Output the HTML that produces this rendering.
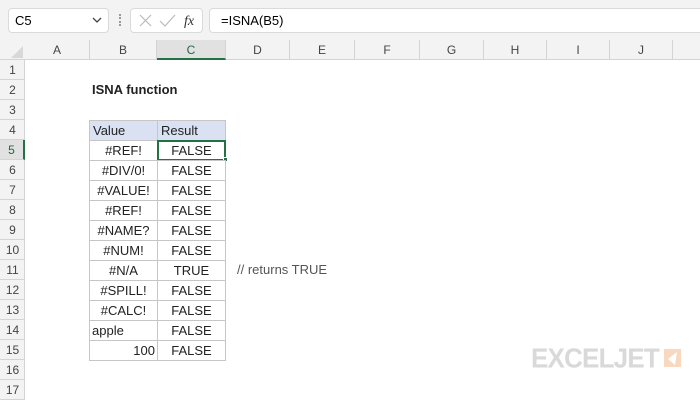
<!DOCTYPE html><html><head><style>
body{margin:0;width:700px;height:400px;overflow:hidden;background:#fff;font-family:"Liberation Sans",sans-serif;position:relative}
div{position:absolute;box-sizing:border-box}
.t{font-size:13px;color:#222;line-height:20px}
.ch{top:40px;height:20px;line-height:20px;text-align:center;font-size:12px;color:#444;border-right:1px solid #d4d4d4}
.rh{left:0;width:25px;height:20px;line-height:20px;text-align:center;font-size:12px;color:#444;border-bottom:1px solid #d4d4d4}
.c{height:21px;border:1px solid #c6c6c6;font-size:13px;line-height:19px;color:#222}
</style></head><body>
<div style="left:0;top:0;width:700px;height:40px;background:#f3f3f3"></div>
<div style="left:8px;top:8px;width:101px;height:25px;background:#fff;border:1px solid #dadada;border-radius:4px;font-size:13px;line-height:23px;padding-left:6px">C5</div>
<svg style="position:absolute;left:92px;top:17px" width="10" height="7"><path d="M1 1L5 5L9 1" stroke="#444" fill="none" stroke-width="1.3"/></svg>
<div style="left:119px;top:14px;width:2px;height:12px;border-left:2px dotted #999"></div>
<div style="left:130px;top:8px;width:73px;height:25px;background:#fff;border:1px solid #dadada;border-radius:4px"></div>
<svg style="position:absolute;left:138px;top:13px" width="60" height="16"><path d="M2 2L13 13M13 2L2 13" stroke="#bbb" stroke-width="1.2"/><path d="M22 8L27 13L37 2" stroke="#bbb" stroke-width="1.2" fill="none"/><text x="46" y="12" font-family="Liberation Serif" font-style="italic" font-size="14" fill="#333">fx</text></svg>
<div style="left:209px;top:8px;width:500px;height:25px;background:#fff;border:1px solid #dadada;border-radius:4px;font-size:13px;line-height:23px;padding-left:11px">=ISNA(B5)</div>
<div style="left:0;top:40px;width:700px;height:20px;background:#f3f3f3;border-bottom:1px solid #d4d4d4"></div>
<div style="left:0;top:60px;width:25px;height:340px;background:#f3f3f3;border-right:1px solid #d4d4d4"></div>
<svg style="position:absolute;left:10px;top:45px" width="14" height="14"><path d="M13 1L13 13L1 13Z" fill="#d8d8d8"/></svg>
<div class="ch" style="left:25px;width:65px">A</div>
<div class="ch" style="left:90px;width:67px">B</div>
<div class="ch" style="left:157px;width:69px;background:#e1e1e1;color:#1e6b3e;border-bottom:2px solid #217346;height:20px">C</div>
<div class="ch" style="left:226px;width:64px">D</div>
<div class="ch" style="left:290px;width:65px">E</div>
<div class="ch" style="left:355px;width:65px">F</div>
<div class="ch" style="left:420px;width:64px">G</div>
<div class="ch" style="left:484px;width:63px">H</div>
<div class="ch" style="left:547px;width:63px">I</div>
<div class="ch" style="left:610px;width:63px">J</div>
<div class="rh" style="top:60px">1</div><div class="rh" style="top:80px">2</div><div class="rh" style="top:100px">3</div><div class="rh" style="top:120px">4</div>
<div class="rh" style="top:140px;background:#e1e1e1;color:#1e6b3e;border-right:2px solid #217346">5</div>
<div class="rh" style="top:160px">6</div><div class="rh" style="top:180px">7</div><div class="rh" style="top:200px">8</div><div class="rh" style="top:220px">9</div><div class="rh" style="top:240px">10</div><div class="rh" style="top:260px">11</div><div class="rh" style="top:280px">12</div><div class="rh" style="top:300px">13</div><div class="rh" style="top:320px">14</div><div class="rh" style="top:340px">15</div><div class="rh" style="top:360px">16</div><div class="rh" style="top:380px">17</div>
<div class="t" style="left:92px;top:80px;font-weight:bold">ISNA function</div>
<div class="c" style="left:89px;top:120px;width:69px;background:#d9e1f2;padding-left:3px">Value</div>
<div class="c" style="left:157px;top:120px;width:69px;background:#d9e1f2;padding-left:3px">Result</div>
<div class="c" style="left:89px;top:140px;width:69px;text-align:center">#REF!</div>
<div class="c" style="left:157px;top:140px;width:69px;text-align:center;border:2px solid #217346;line-height:17px">FALSE</div>
<div style="left:223px;top:157px;width:5px;height:5px;background:#217346;border:1px solid #fff"></div>
<div class="c" style="left:89px;top:160px;width:69px;text-align:center">#DIV/0!</div><div class="c" style="left:157px;top:160px;width:69px;text-align:center">FALSE</div>
<div class="c" style="left:89px;top:180px;width:69px;text-align:center">#VALUE!</div><div class="c" style="left:157px;top:180px;width:69px;text-align:center">FALSE</div>
<div class="c" style="left:89px;top:200px;width:69px;text-align:center">#REF!</div><div class="c" style="left:157px;top:200px;width:69px;text-align:center">FALSE</div>
<div class="c" style="left:89px;top:220px;width:69px;text-align:center">#NAME?</div><div class="c" style="left:157px;top:220px;width:69px;text-align:center">FALSE</div>
<div class="c" style="left:89px;top:240px;width:69px;text-align:center">#NUM!</div><div class="c" style="left:157px;top:240px;width:69px;text-align:center">FALSE</div>
<div class="c" style="left:89px;top:260px;width:69px;text-align:center">#N/A</div><div class="c" style="left:157px;top:260px;width:69px;text-align:center">TRUE</div>
<div class="c" style="left:89px;top:280px;width:69px;text-align:center">#SPILL!</div><div class="c" style="left:157px;top:280px;width:69px;text-align:center">FALSE</div>
<div class="c" style="left:89px;top:300px;width:69px;text-align:center">#CALC!</div><div class="c" style="left:157px;top:300px;width:69px;text-align:center">FALSE</div>
<div class="c" style="left:89px;top:320px;width:69px;padding-left:2px">apple</div><div class="c" style="left:157px;top:320px;width:69px;text-align:center">FALSE</div>
<div class="c" style="left:89px;top:340px;width:69px;text-align:right;padding-right:2px">100</div><div class="c" style="left:157px;top:340px;width:69px;text-align:center">FALSE</div>
<div class="t" style="left:237px;top:260px;color:#555">// returns TRUE</div>
<div style="left:531px;top:342px;font-size:26px;font-weight:bold;color:#d9d9d9;letter-spacing:-0.8px;line-height:32px;transform:scaleY(1.05)">EXCELJET</div>
<div style="left:664px;top:349px;width:17px;height:18px;background:#f8d9bf"></div>
<svg style="position:absolute;left:664px;top:349px" width="17" height="18"><path d="M13 3L4 10L11 16Z" fill="#fff"/></svg>
</body></html>
